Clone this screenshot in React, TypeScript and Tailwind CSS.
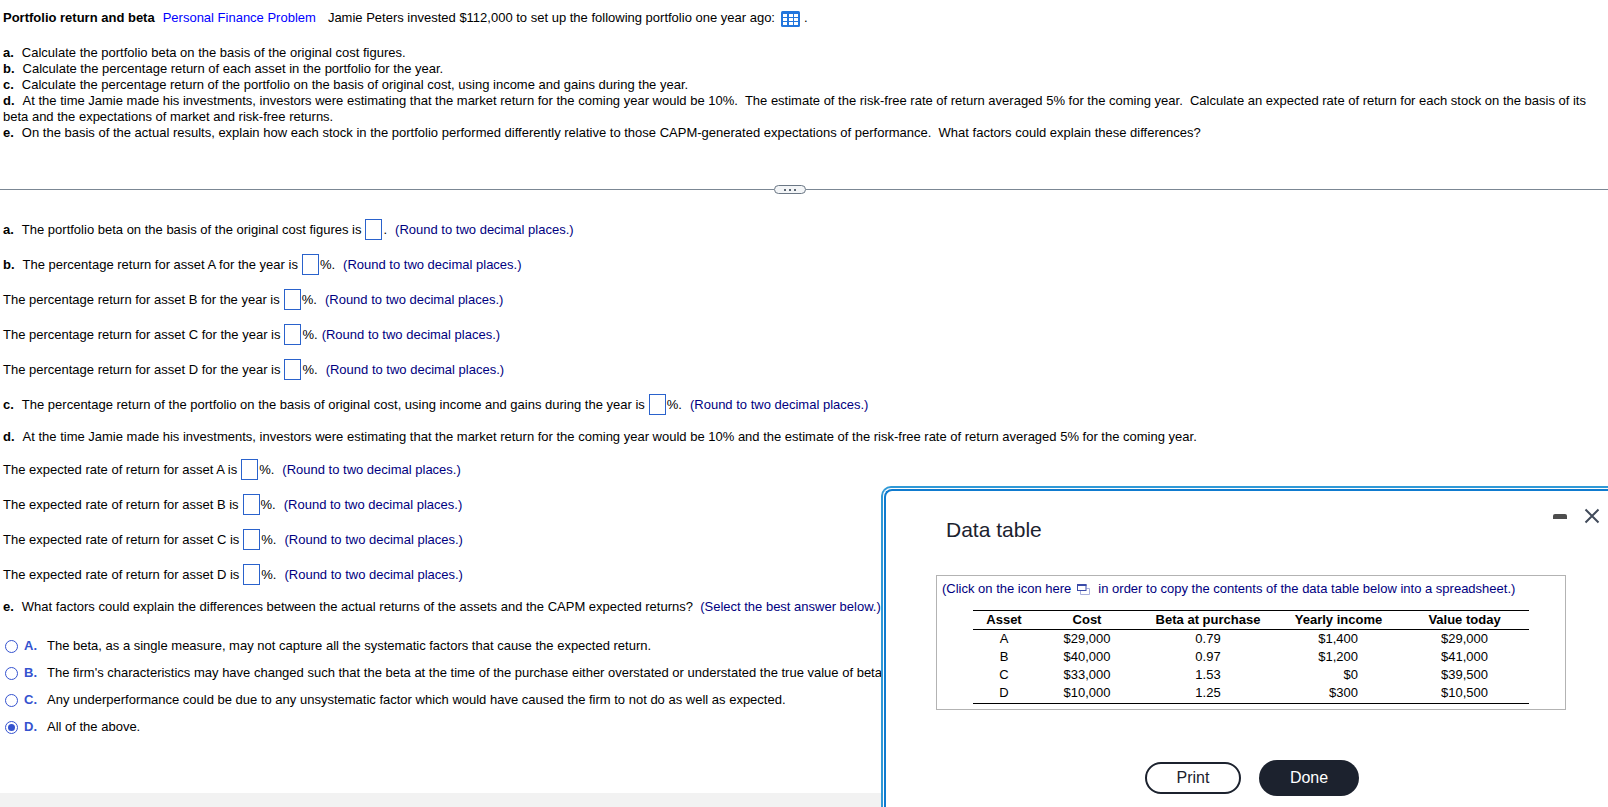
import { useState } from 'react'

const RETURN_ROWS = [
  { id: 'beta', part: 'a.', text: 'The portfolio beta on the basis of the original cost figures is', after: '.' },
  { id: 'return-a', part: 'b.', text: 'The percentage return for asset A for the year is', after: '%.' },
  { id: 'return-b', text: 'The percentage return for asset B for the year is', after: '%.' },
  { id: 'return-c', text: 'The percentage return for asset C for the year is', after: '%.', tight: true },
  { id: 'return-d', text: 'The percentage return for asset D for the year is', after: '%.' },
  {
    id: 'return-portfolio',
    part: 'c.',
    text: 'The percentage return of the portfolio on the basis of original cost, using income and gains during the year is',
    after: '%.',
  },
]

const EXPECTED_ROWS = [
  { id: 'expected-a', text: 'The expected rate of return for asset A is', after: '%.' },
  { id: 'expected-b', text: 'The expected rate of return for asset B is', after: '%.' },
  { id: 'expected-c', text: 'The expected rate of return for asset C is', after: '%.' },
  { id: 'expected-d', text: 'The expected rate of return for asset D is', after: '%.' },
]

const CHOICES = [
  { key: 'A', text: 'The beta, as a single measure, may not capture all the systematic factors that cause the expected return.' },
  {
    key: 'B',
    text: "The firm's characteristics may have changed such that the beta at the time of the purchase either overstated or understated the true value of beta.",
  },
  {
    key: 'C',
    text: 'Any underperformance could be due to any unsystematic factor which would have caused the firm to not do as well as expected.',
  },
  { key: 'D', text: 'All of the above.' },
]

const ASSETS = [
  { asset: 'A', cost: '$29,000', beta: '0.79', income: '$1,400', value: '$29,000' },
  { asset: 'B', cost: '$40,000', beta: '0.97', income: '$1,200', value: '$41,000' },
  { asset: 'C', cost: '$33,000', beta: '1.53', income: '$0', value: '$39,500' },
  { asset: 'D', cost: '$10,000', beta: '1.25', income: '$300', value: '$10,500' },
]

type Row = { id: string; part?: string; text: string; after: string; tight?: boolean }

function AnswerRow({ row }: { row: Row }) {
  return (
    <div className="flex h-[21px] items-center">
      <label htmlFor={row.id}>
        {row.part && <b className="mr-2">{row.part}</b>}
        {row.text}
      </label>
      <input id={row.id} type="text" className="ml-1 h-[21px] w-[17px] border border-[#2a62cc] bg-white outline-none" />
      <span className={row.tight ? 'mr-1 ml-px' : 'mr-2 ml-px'}>{row.after}</span>
      <span className="text-[#000080]">(Round to two decimal places.)</span>
    </div>
  )
}

function TableIcon() {
  return (
    <svg width="19" height="16" viewBox="0 0 19 16" aria-hidden="true">
      <rect width="19" height="16" rx="1.5" fill="#2376dd" />
      <g fill="#fff">
        {[3, 7, 11].map(y =>
          [2, 8, 13].map(x => <rect key={`${x}-${y}`} x={x} y={y} width="4" height="3" />)
        )}
      </g>
    </svg>
  )
}

function CopyIcon() {
  return (
    <svg width="13" height="11" viewBox="0 0 13 11" aria-hidden="true">
      <path d="M3.5 7v3.5h9v-6h-3" fill="none" stroke="#a9b0dd" />
      <rect x="0.5" y="1" width="8.5" height="5.5" fill="#fff" stroke="#3b4ba8" />
      <path d="M0 1h9.5" stroke="#3b4ba8" strokeWidth="2" />
    </svg>
  )
}

function DataTableDialog() {
  return (
    <div
      role="dialog"
      aria-labelledby="dialog-title"
      className="fixed right-0 bottom-0 w-[727px] rounded-tl-[10px] border-t-2 border-l-2 border-[#3099d6] bg-white pt-px pl-px"
    >
      <div className="rounded-tl-lg border-t-2 border-l-2 border-[#0f7bcf] pt-[17px] pb-[11px] pl-[50px]">
        <div className="flex items-start pr-2">
          <h2 id="dialog-title" className="mt-[10px] ml-[10px] flex-1 text-[21px] leading-6 text-[#1c222e]">
            Data table
          </h2>
          <button type="button" aria-label="Minimize" className="mr-[17px] flex h-4 items-center">
            <span className="h-[5px] w-[14px] rounded-t-xs bg-[#4d4d4d]" />
          </button>
          <button type="button" aria-label="Close" className="h-4 w-4">
            <svg width="16" height="16" viewBox="0 0 16 16" aria-hidden="true">
              <path d="M1.5 1.5l13 13M14.5 1.5l-13 13" stroke="#424b5b" strokeWidth="2" />
            </svg>
          </button>
        </div>

        <div className="mt-[33px] mr-[42px] border border-[#b3b3b3] p-[5px]">
          <p className="flex h-4 items-center text-[#000080]">
            (Click on the icon here
            <button type="button" aria-label="Copy table" className="mr-2 ml-[6px]">
              <CopyIcon />
            </button>
            in order to copy the contents of the data table below into a spreadsheet.)
          </p>
          <table className="mt-[13px] ml-[31px] w-[556px] table-fixed border-collapse text-center">
            <thead>
              <tr className="h-[19px] border-y border-black">
                <th className="w-[62px] p-0">Asset</th>
                <th className="w-[104px] p-0">Cost</th>
                <th className="w-[138px] p-0">Beta at purchase</th>
                <th className="w-[123px] p-0">Yearly income</th>
                <th className="w-[129px] p-0">Value today</th>
              </tr>
            </thead>
            <tbody className="border-b border-black">
              {ASSETS.map(a => (
                <tr key={a.asset} className="h-[18px] last:h-5">
                  <td className="p-0">{a.asset}</td>
                  <td className="p-0">{a.cost}</td>
                  <td className="p-0">{a.beta}</td>
                  <td className="p-0 pr-[42px] text-right">{a.income}</td>
                  <td className="p-0">{a.value}</td>
                </tr>
              ))}
            </tbody>
          </table>
        </div>

        <div className="mt-[50px] flex items-center justify-center gap-[18px] pr-10">
          <button type="button" className="h-8 w-24 rounded-full border-2 border-[#1c222e] text-base leading-4 text-[#1c222e]">
            Print
          </button>
          <button type="button" className="h-9 w-[100px] rounded-full bg-[#1c222e] text-base leading-4 text-white">
            Done
          </button>
        </div>
      </div>
    </div>
  )
}

export default function App() {
  const [choice, setChoice] = useState('D')

  return (
    <div className="flex min-h-screen flex-col bg-white font-['Liberation_Sans',Arial,sans-serif] text-[13px] leading-4 text-black">
      {/* Problem statement */}
      <section className="px-[3px] pt-[10px]">
        <div className="flex h-4 items-center">
          <b>Portfolio return and beta</b>
          <span className="ml-2 text-[#0000ff]">Personal Finance Problem</span>
          <span className="ml-3">Jamie Peters invested $112,000 to set up the following portfolio one year ago:</span>
          <button type="button" aria-label="Open data table" className="mr-1 ml-[6px] pt-0.5">
            <TableIcon />
          </button>
          .
        </div>
        <div className="mt-[19px]">
          <p>
            <b className="mr-2">a.</b>Calculate the portfolio beta on the basis of the original cost figures.
          </p>
          <p>
            <b className="mr-2">b.</b>Calculate the percentage return of each asset in the portfolio for the year.
          </p>
          <p>
            <b className="mr-2">c.</b>Calculate the percentage return of the portfolio on the basis of original cost, using
            income and gains during the year.
          </p>
          <p>
            <b className="mr-2">d.</b>At the time Jamie made his investments, investors were estimating that the market
            return for the coming year would be 10%.&nbsp; The estimate of the risk-free rate of return averaged 5% for the
            coming year.&nbsp; Calculate an expected rate of return for each stock on the basis of its beta and the
            expectations of market and risk-free returns.
          </p>
          <p>
            <b className="mr-2">e.</b>On the basis of the actual results, explain how each stock in the portfolio performed
            differently relative to those CAPM-generated expectations of performance.&nbsp; What factors could explain these
            differences?
          </p>
        </div>
      </section>

      {/* Splitter */}
      <div className="mt-11 flex items-center">
        <div className="h-px w-[774px] max-w-full shrink grow bg-[#7b8794]" />
        <button
          type="button"
          aria-label="Resize panels"
          className="flex h-[9px] w-8 items-center justify-center gap-[3px] rounded-full border border-[#6b7785] bg-[#f3f5f7]"
        >
          <span className="h-[2px] w-[2px] bg-[#5b6673]" />
          <span className="h-[2px] w-[2px] bg-[#5b6673]" />
          <span className="h-[2px] w-[2px] bg-[#5b6673]" />
        </button>
        <div className="h-px w-[802px] max-w-full shrink grow bg-[#7b8794]" />
      </div>

      {/* Answers */}
      <form className="flex flex-1 flex-col gap-[14px] px-[3px] pt-[25px]">
        {RETURN_ROWS.map(row => (
          <AnswerRow key={row.id} row={row} />
        ))}
        <p>
          <b className="mr-2">d.</b>At the time Jamie made his investments, investors were estimating that the market return
          for the coming year would be 10% and the estimate of the risk-free rate of return averaged 5% for the coming year.
        </p>
        {EXPECTED_ROWS.map(row => (
          <AnswerRow key={row.id} row={row} />
        ))}
        <fieldset>
          <legend className="mb-[23px]">
            <b className="mr-2">e.</b>What factors could explain the differences between the actual returns of the assets and
            the CAPM expected returns?&nbsp; <span className="text-[#000080]">(Select the best answer below.)</span>
          </legend>
          <div className="flex flex-col gap-[11px]">
            {CHOICES.map(c => (
              <label key={c.key} className="flex h-4 items-center pl-[2px]">
                <input
                  type="radio"
                  name="factors"
                  checked={choice === c.key}
                  onChange={() => setChoice(c.key)}
                  className="h-[13px] w-[13px] appearance-none rounded-full border border-[#3553cf] bg-white bg-clip-content p-[2px] checked:bg-[#3553cf]"
                />
                <span className="ml-[6px] w-[23px] font-bold text-[#3553cf]">{c.key}.</span>
                <span>{c.text}</span>
              </label>
            ))}
          </div>
        </fieldset>
      </form>

      <footer className="h-[14px] bg-[#f2f2f2]" />
      <DataTableDialog />
    </div>
  )
}
